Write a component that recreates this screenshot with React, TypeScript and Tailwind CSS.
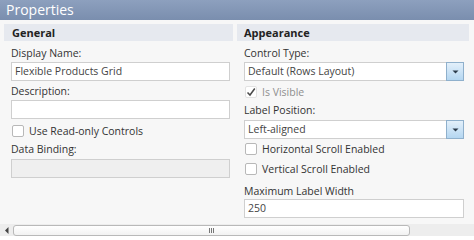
import React from "react";

const font = { fontFamily: '"Open Sans", "Noto Sans", sans-serif' };

function Label({ children, className = "" }: { children: React.ReactNode; className?: string }) {
  return <div className={`h-[14px] leading-[14px] text-[10.5px] text-[#333] ${className}`}>{children}</div>;
}

function Input({ value = "", disabled = false, className = "" }: { value?: string; disabled?: boolean; className?: string }) {
  return (
    <div
      className={`h-[19px] border border-[#cfcfcf] ${disabled ? "bg-[#efefef]" : "bg-white"} px-[3px] text-[10.5px] leading-[17px] text-[#444] ${className}`}
    >
      {value}
    </div>
  );
}

function Select({ value, className = "" }: { value: string; className?: string }) {
  return (
    <div className={`h-[19px] flex border border-[#cfcfcf] bg-white ${className}`}>
      <div className="flex-1 px-[3px] text-[10.5px] leading-[17px] text-[#444]">{value}</div>
      <div className="w-[18px] h-[19px] -mt-px -mr-px border border-[#8fb0cc] bg-gradient-to-b from-[#e3f0fa] to-[#b4d6f1] flex items-center justify-center">
        <svg width="7" height="4" viewBox="0 0 7 4">
          <path d="M0.5 0.5 L6.5 0.5 L3.5 3.5 Z" fill="#2a3a4a" />
        </svg>
      </div>
    </div>
  );
}

function Check({ label, checked = false, disabled = false, className = "" }: { label: string; checked?: boolean; disabled?: boolean; className?: string }) {
  return (
    <div className={`h-[14px] flex items-center ${className}`}>
      <div
        className={`w-[12px] h-[12px] ml-[1px] rounded-[2px] border ${disabled ? "border-[#e2e2e2]" : "border-[#b8b8b8]"} bg-white flex items-center justify-center`}
      >
        {checked && (
          <svg width="10" height="10" viewBox="0 0 10 10">
            <path d="M1.5 5.5 L4 8 L8.8 1.5" stroke="#4a4a4a" strokeWidth="1.5" fill="none" />
          </svg>
        )}
      </div>
      <span className={`ml-[5px] text-[10.5px] leading-[14px] ${disabled ? "text-[#8f8f8f]" : "text-[#333]"}`}>{label}</span>
    </div>
  );
}

export default function App() {
  return (
    <div className="w-[474px] h-[236px] bg-[#f7f7f7] flex flex-col overflow-hidden" style={font}>
      <div className="h-[20px] bg-gradient-to-b from-[#8da0be] to-[#7a8eae] text-white text-[14px] leading-[20px] pl-[6px]">
        Properties
      </div>
      <div className="flex gap-[4px] pl-[4px] pr-[5px]">
        <div className="w-[229px] flex flex-col">
          <div className="mt-[4px] h-[17px] bg-[#e6e9ef] pl-[8px] text-[11px] font-bold leading-[17px] text-[#222]">General</div>
          <div className="pl-[7px] pr-[3px] flex flex-col">
            <Label className="mt-[5px]">Display Name:</Label>
            <Input className="mt-[2px]" value="Flexible Products Grid" />
            <Label className="mt-[3px]">Description:</Label>
            <Input className="mt-[2px]" />
            <Check className="mt-[5px]" label="Use Read-only Controls" />
            <Label className="mt-[4px]">Data Binding:</Label>
            <Input className="mt-[3px]" disabled />
          </div>
        </div>
        <div className="flex-1 flex flex-col">
          <div className="mt-[4px] h-[17px] bg-[#e6e9ef] pl-[7px] text-[11px] font-bold leading-[17px] text-[#222]">Appearance</div>
          <div className="pl-[7px] pr-[5px] flex flex-col">
            <Label className="mt-[5px]">Control Type:</Label>
            <Select className="mt-[2px]" value="Default (Rows Layout)" />
            <Check className="mt-[4px]" label="Is Visible" checked disabled />
            <Label className="mt-[4px]">Label Position:</Label>
            <Select className="mt-[3px]" value="Left-aligned" />
            <Check className="mt-[3px]" label="Horizontal Scroll Enabled" />
            <Check className="mt-[6px]" label="Vertical Scroll Enabled" />
            <Label className="mt-[8px]">Maximum Label Width</Label>
            <Input className="mt-[1px]" value="250" />
          </div>
        </div>
      </div>
      <div className="mt-auto h-[12px] flex bg-[#ededed]">
        <div className="w-[13px] flex items-center justify-center">
          <svg width="4" height="7" viewBox="0 0 4 7">
            <path d="M3.5 0 L3.5 7 L0 3.5 Z" fill="#444" />
          </svg>
        </div>
        <div className="w-[397px] h-[11px] mt-[1px] rounded-[3px] border border-[#b9b9b9] bg-gradient-to-b from-white to-[#f2f2f2] flex items-center justify-center">
          <div className="flex gap-[1px]">
            <div className="w-[1px] h-[5px] bg-[#777]" />
            <div className="w-[1px] h-[5px] bg-[#777]" />
            <div className="w-[1px] h-[5px] bg-[#777]" />
          </div>
        </div>
      </div>
    </div>
  );
}
